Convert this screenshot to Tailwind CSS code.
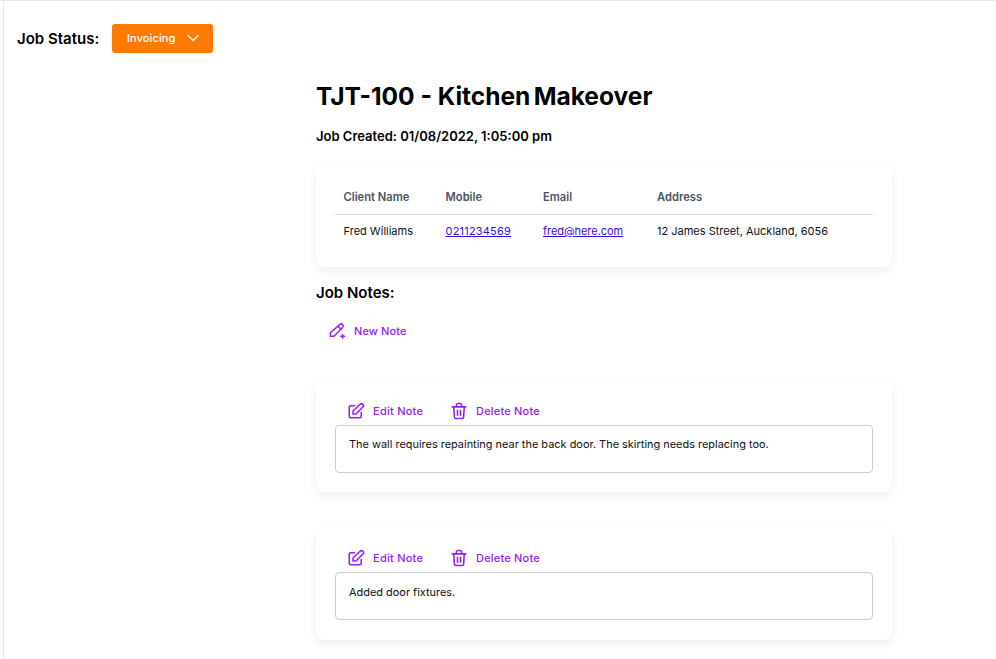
<!DOCTYPE html>
<html>
<head>
<meta charset="utf-8">
<script src="https://cdn.jsdelivr.net/npm/@tailwindcss/browser@4"></script>
</head>
<body class="bg-white font-['Inter',sans-serif] text-black overflow-hidden">
<div class="h-[659px] w-[996px] overflow-hidden border-t border-[#e5e7eb]">
  <div class="h-full ml-[3px] border-l border-[#e5e7eb]">
    <div class="flex items-center pt-[22px] pl-[13px] h-[52px]">
      <span class="text-[15px] leading-[29px] font-semibold w-[95px]">Job Status:</span>
      <button class="flex items-center h-[29px] w-[101px] pl-[15px] bg-[#ff7a00] rounded-[3px] text-white text-[11px] font-medium">
        <span class="tracking-[0.1px]">Invoicing</span>
        <svg class="ml-[12px]" width="12" height="8" viewBox="0 0 12 8" fill="none" stroke="white" stroke-width="1.3" stroke-linecap="round" stroke-linejoin="round"><path d="M1 1.5l5 5 5-5"/></svg>
      </button>
    </div>
    <main class="ml-[312px] w-[576px]">
      <h1 class="mt-[25px] text-[24.5px] leading-[36px] font-bold">TJT-100 - Kitchen<span class="ml-[-2.5px]"> Makeover</span></h1>
      <p class="mt-[12px] text-[13px] leading-[20px] font-semibold">Job Created: 01/08/2022, 1:05:00 pm</p>

      <section class="mt-[19px] h-[102px] rounded-lg bg-white shadow-[0_4px_10px_rgba(0,0,0,0.07)] px-[19px] pt-[15px]">
        <div class="grid grid-cols-[102px_97.5px_114px_1fr] pl-[8.5px] h-[35px] border-b border-[#d8dde3] text-[11.2px] leading-[34px] font-semibold text-[#4b5563]">
          <span>Client Name</span><span>Mobile</span><span>Email</span><span>Address</span>
        </div>
        <div class="grid grid-cols-[102px_97.5px_114px_1fr] pl-[8.5px] text-[11px] leading-[32px] text-[#111]">
          <span>Fred Williams</span>
          <a class="text-[#3b0be0] underline tracking-[0.2px] justify-self-start">0211234569</a>
          <a class="text-[#3b0be0] underline tracking-[-0.05px] justify-self-start">fred@here.com</a>
          <span>12 James Street, Auckland, 6056</span>
        </div>
      </section>

      <h2 class="mt-[16px] text-[15px] leading-[20px] font-semibold">Job Notes:</h2>
      <button class="mt-[18px] ml-[12px] flex items-center h-[20px] text-[#9321f8] text-[11px] font-medium tracking-[0.1px]">
        <svg width="18" height="18" viewBox="0 0 24 24" fill="none" stroke="currentColor" stroke-width="2" stroke-linecap="round" stroke-linejoin="round"><path d="M15.5 3.5a2.7 2.7 0 0 1 3.9 3.8L8 19H3.2v-4.6z"/><path d="M13.5 6l3.8 3.6"/><path d="M19.5 16.5v5M17 19h5"/></svg>
        <span class="ml-[8px]">New Note</span>
      </button>

      <section class="mt-[39px] h-[112px] rounded-lg bg-white shadow-[0_4px_10px_rgba(0,0,0,0.07)] px-[19px] pt-[20px]">
        <div class="flex items-center h-[22px] pl-[12px] text-[#9321f8] text-[11px] font-medium tracking-[0.25px]">
          <svg width="18" height="18" viewBox="0 0 24 24" fill="none" stroke="currentColor" stroke-width="2.1" stroke-linecap="round" stroke-linejoin="round"><path d="M10 5H5a2 2 0 0 0-2 2v12a2 2 0 0 0 2 2h12a2 2 0 0 0 2-2v-5"/><path d="M17.5 3a2.6 2.6 0 0 1 3.7 3.7L12 16H8v-4z"/></svg>
          <span class="ml-[8px] w-[77px]">Edit Note</span>
          <svg width="18" height="18" viewBox="0 0 24 24" fill="none" stroke="currentColor" stroke-width="2.1" stroke-linecap="round" stroke-linejoin="round"><path d="M3 6.5h18"/><path d="M5 6.5l.8 13.5a2 2 0 0 0 2 2h8.4a2 2 0 0 0 2-2L19 6.5"/><path d="M8.5 6V4a2 2 0 0 1 2-2h3a2 2 0 0 1 2 2v2"/><path d="M10 11v6.5M14 11v6.5"/></svg>
          <span class="ml-[8px] tracking-[0.2px]">Delete Note</span>
        </div>
        <div class="mt-[3px] h-[48px] rounded-[4px] border border-[#cbd0d6] px-[13px] pt-[9px] text-[10.95px] leading-[18px] text-[#111]">The wall requires repainting near the back door. The skirting needs replacing too.</div>
      </section>

      <section class="mt-[35px] h-[113px] rounded-lg bg-white shadow-[0_4px_10px_rgba(0,0,0,0.07)] px-[19px] pt-[20px]">
        <div class="flex items-center h-[22px] pl-[12px] text-[#9321f8] text-[11px] font-medium tracking-[0.25px]">
          <svg width="18" height="18" viewBox="0 0 24 24" fill="none" stroke="currentColor" stroke-width="2.1" stroke-linecap="round" stroke-linejoin="round"><path d="M10 5H5a2 2 0 0 0-2 2v12a2 2 0 0 0 2 2h12a2 2 0 0 0 2-2v-5"/><path d="M17.5 3a2.6 2.6 0 0 1 3.7 3.7L12 16H8v-4z"/></svg>
          <span class="ml-[8px] w-[77px]">Edit Note</span>
          <svg width="18" height="18" viewBox="0 0 24 24" fill="none" stroke="currentColor" stroke-width="2.1" stroke-linecap="round" stroke-linejoin="round"><path d="M3 6.5h18"/><path d="M5 6.5l.8 13.5a2 2 0 0 0 2 2h8.4a2 2 0 0 0 2-2L19 6.5"/><path d="M8.5 6V4a2 2 0 0 1 2-2h3a2 2 0 0 1 2 2v2"/><path d="M10 11v6.5M14 11v6.5"/></svg>
          <span class="ml-[8px] tracking-[0.2px]">Delete Note</span>
        </div>
        <div class="mt-[3px] h-[48px] rounded-[4px] border border-[#cbd0d6] px-[13px] pt-[10px] text-[10.95px] leading-[18px] text-[#111]">Added door fixtures.</div>
      </section>
    </main>
  </div>
</div>
</body>
</html>
